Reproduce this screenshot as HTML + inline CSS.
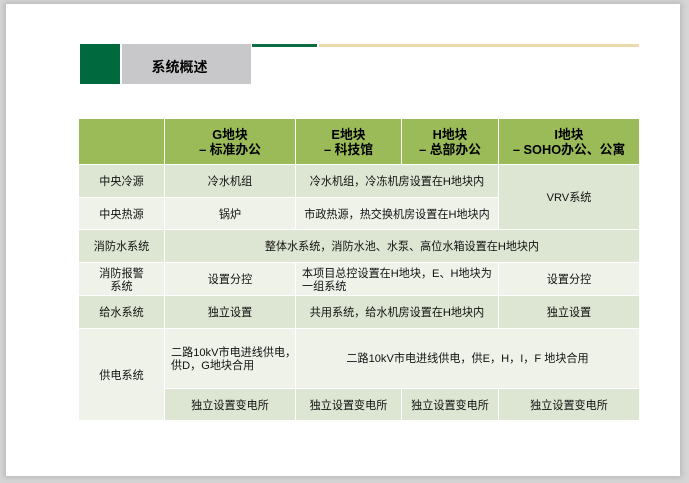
<!DOCTYPE html>
<html lang="zh">
<head>
<meta charset="utf-8">
<style>
html,body{margin:0;padding:0;width:689px;height:483px;overflow:hidden;background:#fff}
body{position:relative;font-family:"Liberation Sans","Noto Sans CJK SC",sans-serif;color:#111}
#bg{position:absolute;left:0;top:0;width:689px;height:483px;background:#d6d6d6}
#page{position:absolute;left:6px;top:4px;width:674px;height:472px;background:#fff;box-shadow:0 0 5px 2px #bbb}
.b{position:absolute}
.c{position:absolute;display:flex;align-items:center;justify-content:center;text-align:center;font-size:11.1px;line-height:13.5px;box-sizing:border-box;padding-top:4px;white-space:nowrap}
.h{font-size:12.8px;font-weight:700;line-height:15px;background:#9bbb59;color:#000;padding-top:0}
.d{background:#dde6d2}
.l{background:#eff2e9}
.t{justify-content:flex-start;text-align:left}
</style>
</head>
<body>
<div id="bg"></div>
<div id="page"></div>

<div class="b" style="left:80px;top:44px;width:40px;height:40px;background:#006a3f"></div>
<div class="b" style="left:122px;top:44px;width:129px;height:40px;background:#c8c7c9"></div>
<div class="b" style="left:252px;top:44px;width:65px;height:3px;background:#0b6b42"></div>
<div class="b" style="left:319px;top:44px;width:320px;height:3px;background:#ecd9ae"></div>
<div class="c" style="left:122px;top:47px;width:115px;height:40px;font-size:14px;font-weight:700;color:#000;padding-top:2px">系统概述</div>

<div class="c h" style="left:79px;top:119px;width:85px;height:45px"></div>
<div class="c h" style="left:165px;top:119px;width:130px;height:45px">G地块<br>– 标准办公</div>
<div class="c h" style="left:296px;top:119px;width:105px;height:45px">E地块<br>– 科技馆</div>
<div class="c h" style="left:402px;top:119px;width:96px;height:45px">H地块<br>– 总部办公</div>
<div class="c h" style="left:499px;top:119px;width:140px;height:45px">I地块<br>– SOHO办公、公寓</div>

<div class="c d" style="left:79px;top:165px;width:85px;height:32px">中央冷源</div>
<div class="c d" style="left:165px;top:165px;width:130px;height:32px">冷水机组</div>
<div class="c d" style="left:296px;top:165px;width:202px;height:32px">冷水机组，冷冻机房设置在H地块内</div>
<div class="c d" style="left:499px;top:165px;width:140px;height:64px">VRV系统</div>

<div class="c l" style="left:79px;top:198px;width:85px;height:31px;padding-top:5px">中央热源</div>
<div class="c l" style="left:165px;top:198px;width:130px;height:31px;padding-top:5px">锅炉</div>
<div class="c l" style="left:296px;top:198px;width:202px;height:31px;padding-top:5px">市政热源，热交换机房设置在H地块内</div>

<div class="c d" style="left:79px;top:230px;width:85px;height:32px">消防水系统</div>
<div class="c d" style="left:165px;top:230px;width:474px;height:32px">整体水系统，消防水池、水泵、高位水箱设置在H地块内</div>

<div class="c l" style="left:79px;top:263px;width:85px;height:32px">消防报警<br>系统</div>
<div class="c l" style="left:165px;top:263px;width:130px;height:32px">设置分控</div>
<div class="c l t" style="left:296px;top:263px;width:202px;height:32px;padding-left:6px">本项目总控设置在H地块，E、H地块为<br>一组系统</div>
<div class="c l" style="left:499px;top:263px;width:140px;height:32px">设置分控</div>

<div class="c d" style="left:79px;top:296px;width:85px;height:32px">给水系统</div>
<div class="c d" style="left:165px;top:296px;width:130px;height:32px">独立设置</div>
<div class="c d" style="left:296px;top:296px;width:202px;height:32px">共用系统，给水机房设置在H地块内</div>
<div class="c d" style="left:499px;top:296px;width:140px;height:32px">独立设置</div>

<div class="c l" style="left:79px;top:329px;width:85px;height:91px">供电系统</div>
<div class="c l t" style="left:165px;top:329px;width:130px;height:59px;padding:3px 0 0 6px">二路10kV市电进线供电，<br>供D，G地块合用</div>
<div class="c l" style="left:296px;top:329px;width:343px;height:59px;padding:3px 0 0 0">二路10kV市电进线供电，供E，H，I，F 地块合用</div>

<div class="c d" style="left:165px;top:389px;width:130px;height:31px;padding-top:5px">独立设置变电所</div>
<div class="c d" style="left:296px;top:389px;width:105px;height:31px;padding-top:5px">独立设置变电所</div>
<div class="c d" style="left:402px;top:389px;width:96px;height:31px;padding-top:5px">独立设置变电所</div>
<div class="c d" style="left:499px;top:389px;width:140px;height:31px;padding-top:5px">独立设置变电所</div>
</body>
</html>
